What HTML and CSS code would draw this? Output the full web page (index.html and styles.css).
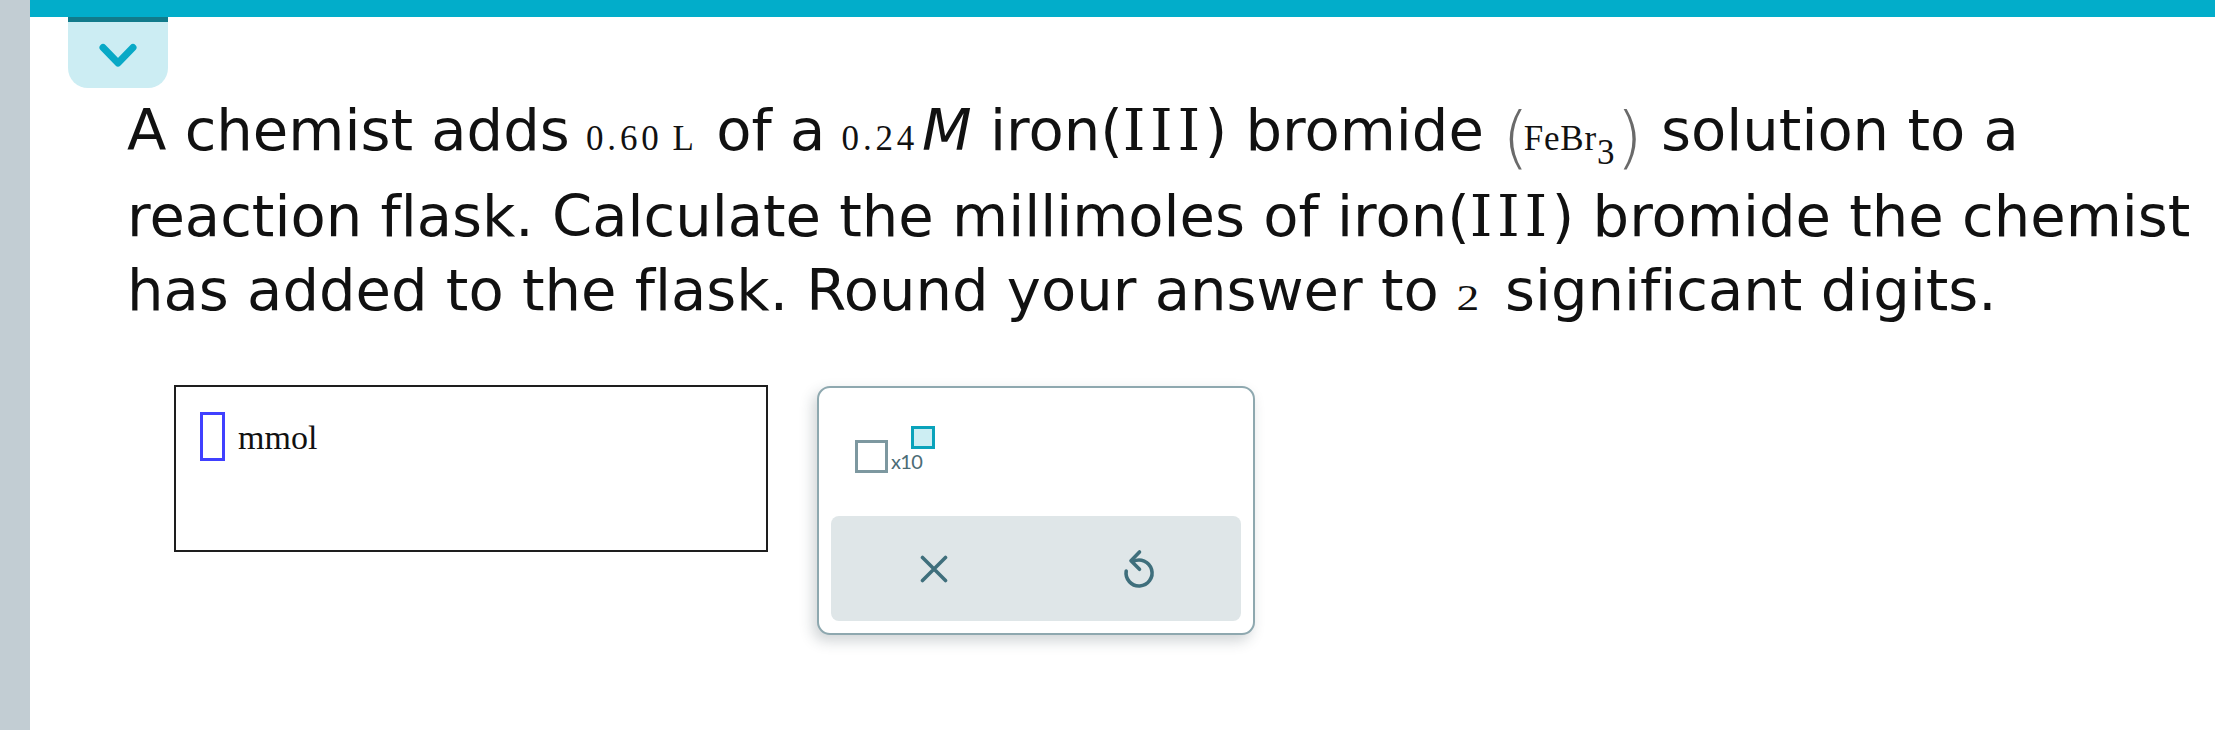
FILE: index.html
```html
<!DOCTYPE html>
<html lang="en">
<head>
<meta charset="utf-8">
<title>Question</title>
<link rel="stylesheet" href="styles.css">
</head>
<body>
<div class="app">
  <aside class="rail"></aside>
  <main class="main">
    <div class="topbar"></div>
    <div class="tab">
      <svg class="chev" width="40" height="28" viewBox="0 0 40 28"><polyline points="5,5.5 20,21 35,5.5" fill="none" stroke="#08a9c6" stroke-width="7" stroke-linecap="round" stroke-linejoin="round"/></svg>
    </div>
    <p class="question"><span class="strut"></span>A chemist adds <span class="math"><span class="digits">0.60</span><span class="mu">L</span></span> of a <span class="math"><span class="digits">0.24</span></span><i class="molar">M</i> iron(<span class="roman">III</span>) bromide <span class="paren">(</span><span class="chem">FeBr<span class="sub">3</span></span><span class="paren close">)</span> solution to a reaction flask. Calculate the millimoles of iron(<span class="roman">III</span>) bromide the chemist has added to the flask. Round your answer to <span class="math"><span class="digit-one">2</span></span> significant digits.</p>
    <div class="answer-row">
      <div class="answer-box">
        <span class="cursor"></span>
        <span class="unit">mmol</span>
      </div>
      <div class="keypad">
        <div class="sci-row">
          <div class="sci">
            <span class="base"></span>
            <span class="x10">x10</span>
            <span class="exp"></span>
          </div>
        </div>
        <div class="actions">
          <div class="action">
            <svg width="28" height="28" viewBox="0 0 28 28"><path d="M2.5 2.5 L25.5 25.5 M25.5 2.5 L2.5 25.5" fill="none" stroke="#3f6f7c" stroke-width="3.6" stroke-linecap="round"/></svg>
          </div>
          <div class="action">
            <svg width="34" height="42" viewBox="0 0 34 42"><path d="M4.2 23 A13 13 0 1 0 11 13.5" fill="none" stroke="#3f6f7c" stroke-width="3.6" stroke-linecap="round"/><path d="M17.5 4 L9 12.8 L17.5 21.3" fill="none" stroke="#3f6f7c" stroke-width="3.6" stroke-linecap="round" stroke-linejoin="round"/></svg>
          </div>
        </div>
      </div>
    </div>
  </main>
</div>
</body>
</html>
```

FILE: styles.css
```css
html, body {
  margin: 0;
  padding: 0;
  background: #ffffff;
}
body {
  width: 2215px;
  height: 730px;
  overflow: hidden;
}
.app {
  display: flex;
  height: 730px;
}
.rail {
  flex: none;
  width: 30px;
  background: #c2cdd3;
}
.main {
  flex: 1;
  min-width: 0;
}
.topbar {
  height: 17px;
  background: #02adca;
}
.tab {
  box-sizing: border-box;
  width: 100px;
  height: 71px;
  margin-left: 38px;
  border-top: 5px solid #117b8b;
  background: #ccedf3;
  border-radius: 0 0 20px 20px;
  display: flex;
  justify-content: center;
  align-items: flex-start;
  padding-top: 20px;
}
.chev { display: block; }

.question {
  margin: 5px 0 0 97px;
  padding-right: 20px;
  font-family: "DejaVu Sans", Verdana, sans-serif;
  font-size: 57.6px;
  line-height: 74px;
  color: #111111;
  font-variant-ligatures: none;
}
.strut {
  display: inline-block;
  width: 0;
  height: 87px;
  vertical-align: -30px;
}
.roman {
  font-family: "DejaVu Serif", serif;
  letter-spacing: 0.08em;
}
.math {
  font-family: "Liberation Serif", "Times New Roman", serif;
  font-size: 35px;
  line-height: 1;
  letter-spacing: 0;
  margin: 0 4px 0 -2px;
}
.digits {
  letter-spacing: 3.8px;
}
.mu {
  margin-left: 10px;
}
.digit-one {
  display: inline-block;
  transform: scaleX(1.3);
  margin: 0 6px 0 4px;
}
.molar {
  font-style: italic;
}
.paren {
  font-family: "DejaVu Sans", sans-serif;
  font-weight: 200;
  font-size: 68px;
  line-height: 0;
  letter-spacing: 0;
  vertical-align: -11px;
  color: #6a6a6a;
}
.paren.close {
  margin-left: 1px;
}
.chem {
  font-family: "Liberation Serif", "Times New Roman", serif;
  font-size: 35px;
  line-height: 1;
  letter-spacing: 0.8px;
  margin-left: -5px;
}
.sub {
  font-size: 35px;
  line-height: 0;
  vertical-align: -14px;
}

.answer-row {
  display: flex;
  align-items: flex-start;
  margin-top: 57px;
  padding-left: 144px;
}
.answer-box {
  box-sizing: border-box;
  width: 594px;
  height: 167px;
  border: 2px solid #1e1e1e;
  padding: 25px 0 0 24px;
  display: flex;
  align-items: flex-start;
}
.cursor {
  box-sizing: border-box;
  width: 25px;
  height: 49px;
  border: 3px solid #4040ff;
}
.unit {
  margin: 9px 0 0 13px;
  font-family: "Liberation Serif", "Times New Roman", serif;
  font-size: 34px;
  line-height: 34px;
  color: #111111;
}

.keypad {
  box-sizing: border-box;
  width: 438px;
  height: 249px;
  margin: 1px 0 0 49px;
  border: 2px solid #8ea8af;
  border-radius: 13px;
  padding: 0 12px 12px 12px;
  background: #ffffff;
  box-shadow: -4px 6px 14px rgba(40, 60, 70, 0.22);
  display: flex;
  flex-direction: column;
}
.sci-row {
  height: 128px;
  padding: 38px 0 0 24px;
  box-sizing: border-box;
}
.sci {
  display: flex;
  align-items: flex-start;
}
.base {
  box-sizing: border-box;
  width: 33px;
  height: 33px;
  margin-top: 14px;
  border: 3px solid #7d98a0;
}
.x10 {
  margin: 26px 0 0 3px;
  font-family: Lato, "Open Sans", sans-serif;
  font-size: 20px;
  line-height: 19px;
  letter-spacing: -0.6px;
  color: #4b6c76;
}
.exp {
  box-sizing: border-box;
  width: 24px;
  height: 23px;
  margin-left: -11px;
  border: 3px solid #0aa3bb;
  background: #cdeef3;
}
.actions {
  flex: 1;
  display: grid;
  grid-template-columns: 1fr 1fr;
  align-items: center;
  justify-items: center;
  background: #dfe6e8;
  border-radius: 8px;
}
.action svg { display: block; }
```
